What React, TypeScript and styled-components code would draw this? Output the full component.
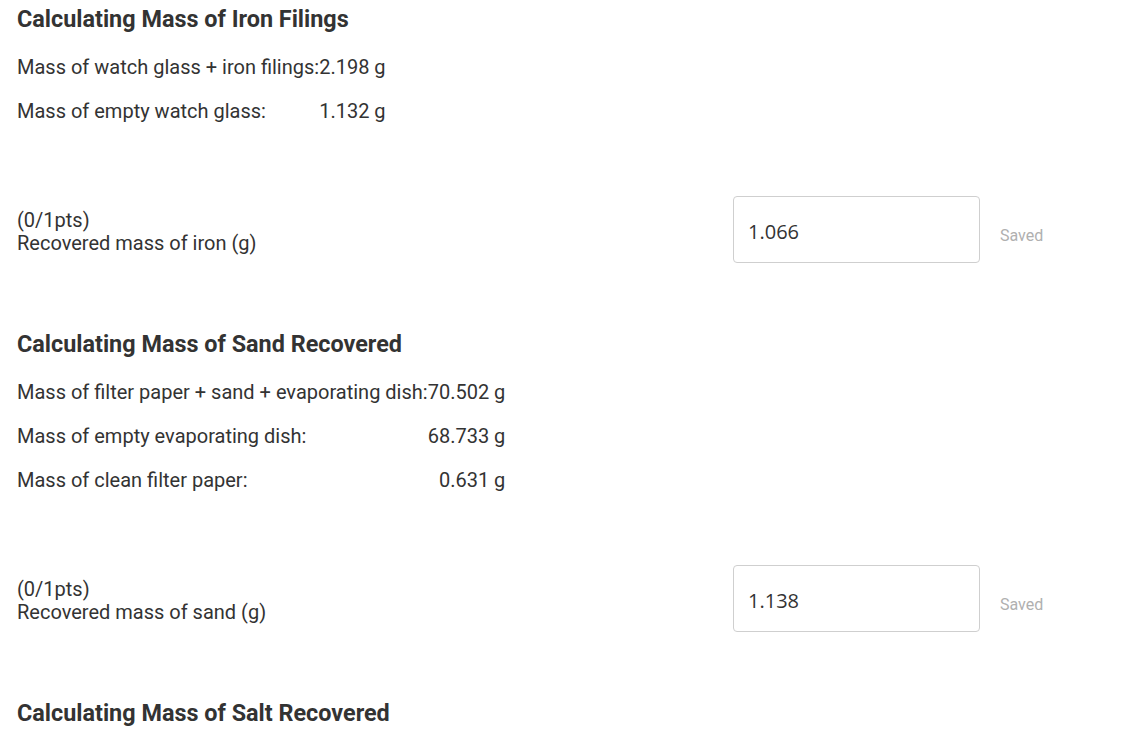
import styled, { createGlobalStyle } from 'styled-components';

interface Measurement {
  label: string;
  value: string;
}

interface Question {
  label: string;
  answer: string;
}

interface Section {
  title: string;
  rows: Measurement[];
  question?: Question;
}

const GlobalStyle = createGlobalStyle`
  html, body {
    margin: 0;
    padding: 0;
    background: #fff;
  }
  body {
    font-family: Roboto, "Liberation Sans", Arial, sans-serif;
    color: #333;
    overflow: hidden;
  }
`;

const Page = styled.div`
  padding: 7px 0 0 17px;
`;

const SectionBlock = styled.section`
  margin-bottom: 69px;
`;

const Heading = styled.h3`
  margin: 0 0 14px;
  font-size: 23.4px;
  line-height: 24px;
  font-weight: 700;
  color: #333;
`;

const DataTable = styled.div`
  display: grid;
  grid-template-columns: auto auto;
  justify-content: start;
  grid-auto-rows: 44px;
  align-items: center;
  font-size: 20px;
`;

const Label = styled.span`
  white-space: nowrap;
`;

const Value = styled.span`
  text-align: right;
  white-space: nowrap;
`;

const QuestionRow = styled.div`
  display: grid;
  grid-template-columns: 696px 247px auto;
  column-gap: 20px;
  align-items: center;
  margin-top: 63px;
`;

const QuestionLabel = styled.div`
  font-size: 20px;
  line-height: 23px;
  padding-top: 5px;
`;

const AnswerInput = styled.input`
  box-sizing: border-box;
  width: 247px;
  height: 67px;
  border: 1px solid #cfcfcf;
  border-radius: 4px;
  padding: 3px 14px 0;
  font-family: "Open Sans", Roboto, sans-serif;
  font-size: 20px;
  color: #333;
  outline: none;
`;

const Status = styled.span`
  font-size: 16px;
  color: #b0b0b0;
  padding-top: 12px;
`;

const sections: Section[] = [
  {
    title: 'Calculating Mass of Iron Filings',
    rows: [
      { label: 'Mass of watch glass + iron filings:', value: '2.198 g' },
      { label: 'Mass of empty watch glass:', value: '1.132 g' },
    ],
    question: { label: 'Recovered mass of iron (g)', answer: '1.066' },
  },
  {
    title: 'Calculating Mass of Sand Recovered',
    rows: [
      { label: 'Mass of filter paper + sand + evaporating dish:', value: '70.502 g' },
      { label: 'Mass of empty evaporating dish:', value: '68.733 g' },
      { label: 'Mass of clean filter paper:', value: '0.631 g' },
    ],
    question: { label: 'Recovered mass of sand (g)', answer: '1.138' },
  },
  {
    title: 'Calculating Mass of Salt Recovered',
    rows: [],
  },
];

export default function App() {
  return (
    <>
      <GlobalStyle />
      <Page>
        {sections.map((s) => (
          <SectionBlock key={s.title}>
            <Heading>{s.title}</Heading>
            {s.rows.length > 0 && (
              <DataTable>
                {s.rows.map((r) => (
                  <>
                    <Label key={`l_${r.label}`}>{r.label}</Label>
                    <Value key={`v_${r.label}`}>{r.value}</Value>
                  </>
                ))}
              </DataTable>
            )}
            {s.question && (
              <QuestionRow>
                <QuestionLabel>
                  (0/1pts)
                  <br />
                  {s.question.label}
                </QuestionLabel>
                <AnswerInput defaultValue={s.question.answer} />
                <Status>Saved</Status>
              </QuestionRow>
            )}
          </SectionBlock>
        ))}
      </Page>
    </>
  );
}
